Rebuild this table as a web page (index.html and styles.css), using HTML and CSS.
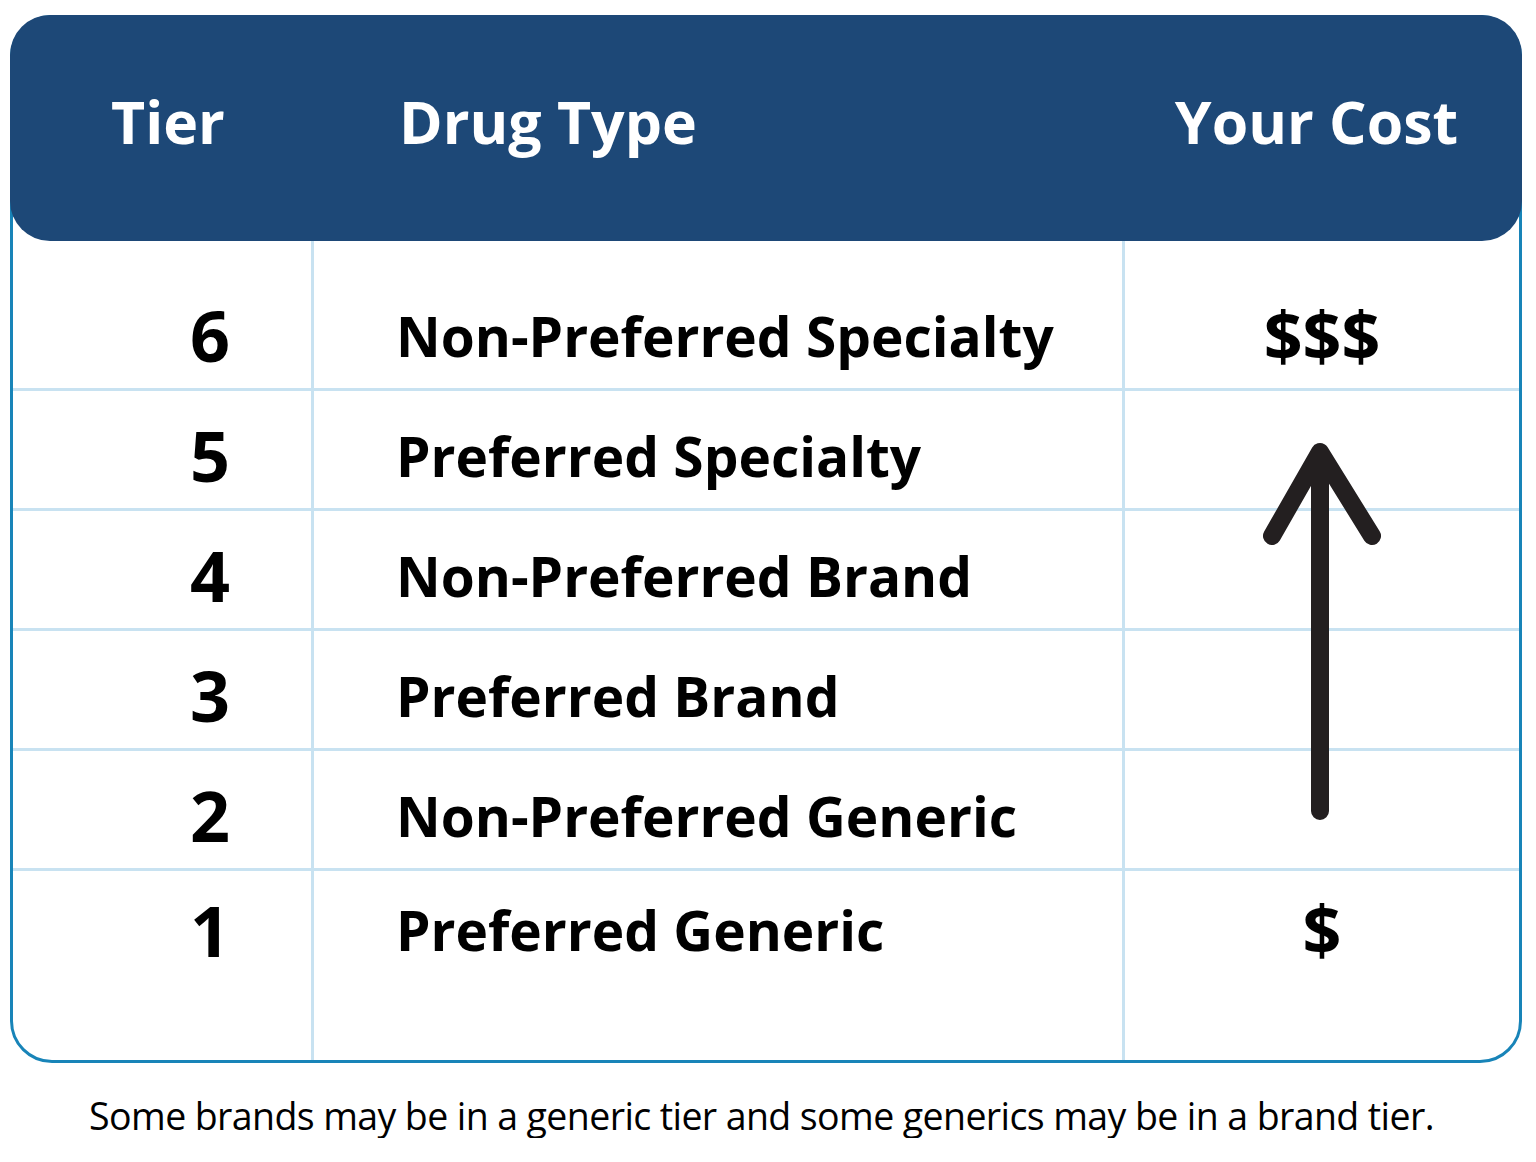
FILE: index.html
```html
<!DOCTYPE html>
<html lang="en">
<head>
<meta charset="utf-8">
<title>Drug Tiers</title>
<link rel="stylesheet" href="styles.css">
</head>
<body>
<div class="card">
  <div class="head">
    <div class="h-tier">Tier</div>
    <div class="h-type">Drug Type</div>
    <div class="h-cost">Your Cost</div>
  </div>
  <div class="body">
    <div class="row row-first">
      <div class="cell tier">6</div>
      <div class="cell type">Non-Preferred Specialty</div>
      <div class="cell cost">$$$</div>
    </div>
    <div class="row">
      <div class="cell tier">5</div>
      <div class="cell type">Preferred Specialty</div>
      <div class="cell cost"></div>
    </div>
    <div class="row">
      <div class="cell tier">4</div>
      <div class="cell type">Non-Preferred Brand</div>
      <div class="cell cost"></div>
    </div>
    <div class="row">
      <div class="cell tier">3</div>
      <div class="cell type">Preferred Brand</div>
      <div class="cell cost"></div>
    </div>
    <div class="row">
      <div class="cell tier">2</div>
      <div class="cell type">Non-Preferred Generic</div>
      <div class="cell cost"></div>
    </div>
    <div class="row row-last">
      <div class="cell tier">1</div>
      <div class="cell type">Preferred Generic</div>
      <div class="cell cost">$</div>
    </div>
    <svg class="arrow" width="160" height="420" viewBox="0 0 160 420" aria-hidden="true">
      <path d="M80 390 V34 M32 115 L80 31 L132 115" fill="none" stroke="#231f20" stroke-width="18" stroke-linecap="round" stroke-linejoin="round"/>
    </svg>
  </div>
</div>
<p class="note">Some brands may be in a generic tier and some generics may be in a brand tier.</p>
</body>
</html>
```

FILE: styles.css
```css
html, body {
  margin: 0;
  padding: 0;
  background: #ffffff;
}

body {
  font-family: "Open Sans", "Liberation Sans", sans-serif;
  color: #000000;
  width: 1536px;
}

.card {
  box-sizing: border-box;
  width: 1512px;
  height: 1048px;
  margin: 15px 0 0 10px;
  border: 3px solid #1884b8;
  border-radius: 42px;
  display: flex;
  flex-direction: column;
}

.head {
  margin: -3px -3px 0;
  height: 226px;
  background: #1d4877;
  border-radius: 40px;
  display: grid;
  grid-template-columns: 304px 811px 1fr;
  align-items: center;
  color: #ffffff;
  font-weight: 700;
  font-size: 59px;
  line-height: 1;
  flex: none;
}

.h-tier {
  text-align: center;
  padding-left: 12px;
  padding-bottom: 14px;
}

.h-type {
  padding-left: 85px;
  padding-bottom: 14px;
}

.h-cost {
  text-align: center;
  padding-right: 14px;
  padding-bottom: 14px;
}

.body {
  position: relative;
  flex: 1;
  display: flex;
  flex-direction: column;
}

.row {
  box-sizing: border-box;
  height: 120px;
  display: grid;
  grid-template-columns: 301px 811px 1fr;
  border-bottom: 3px solid #c8e2f1;
}

.row-first {
  height: 150px;
}

.row-first .cell {
  padding-top: 41px;
}

.row-last {
  flex: 1;
  border-bottom: none;
}

.cell {
  box-sizing: border-box;
  display: flex;
  align-items: center;
  padding-top: 11px;
  font-weight: 700;
  line-height: 1;
}

.row-last .cell {
  align-items: flex-start;
  padding-top: 31px;
}

.tier {
  justify-content: center;
  padding-left: 96px;
  font-size: 70px;
  border-right: 3px solid #c8e2f1;
}

.type {
  padding-left: 82px;
  font-size: 55px;
  border-right: 3px solid #c8e2f1;
}

.cost {
  justify-content: center;
  font-size: 68px;
}

.row-last .tier,
.row-last .cost {
  padding-top: 24px;
}

.arrow {
  position: absolute;
  left: 1227px;
  top: 180px;
}

.note {
  margin: 30px 0 0;
  padding-right: 13px;
  text-align: center;
  font-family: "Open Sans", "Liberation Sans", sans-serif;
  font-size: 37.5px;
  line-height: 1.2;
  letter-spacing: -0.6px;
}
```
